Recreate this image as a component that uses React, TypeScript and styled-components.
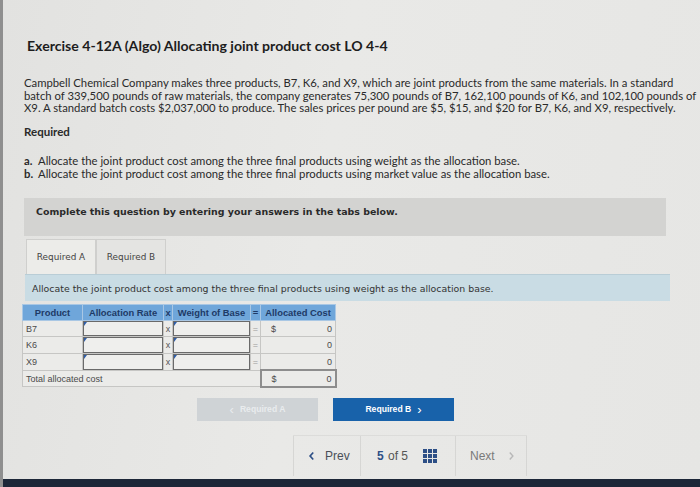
import React from "react";
import styled, { createGlobalStyle } from "styled-components";

const GlobalStyle = createGlobalStyle`
  html, body {
    margin: 0;
    padding: 0;
    background: #e6e6e4;
  }
`;

type Row = { product: string; dollar: boolean };

const rows: Row[] = [
  { product: "B7", dollar: true },
  { product: "K6", dollar: false },
  { product: "X9", dollar: false },
];

const paragraph = [
  "Campbell Chemical Company makes three products, B7, K6, and X9, which are joint products from the same materials. In a standard",
  "batch of 339,500 pounds of raw materials, the company generates 75,300 pounds of B7, 162,100 pounds of K6, and 102,100 pounds of",
  "X9. A standard batch costs $2,037,000 to produce. The sales prices per pound are $5, $15, and $20 for B7, K6, and X9, respectively.",
];

function App() {
  return (
    <Page>
      <GlobalStyle />
      <Content>
        <Title>Exercise 4-12A (Algo) Allocating joint product cost LO 4-4</Title>
        <Paragraph>
          {paragraph.map((line) => (
            <Line key={line}>{line}</Line>
          ))}
        </Paragraph>
        <Required>Required</Required>
        <List>
          <Item>
            <b>a.</b>
            <span>Allocate the joint product cost among the three final products using weight as the allocation base.</span>
          </Item>
          <Item>
            <b>b.</b>
            <span>Allocate the joint product cost among the three final products using market value as the allocation base.</span>
          </Item>
        </List>
        <Notice>Complete this question by entering your answers in the tabs below.</Notice>
        <Tabs>
          <Tab $active>Required A</Tab>
          <Tab>Required B</Tab>
        </Tabs>
        <Instruction>
          Allocate the joint product cost among the three final products using weight as the allocation base.
        </Instruction>
        <Table>
          <colgroup>
            <col style={{ width: 60 }} />
            <col style={{ width: 81 }} />
            <col style={{ width: 9 }} />
            <col style={{ width: 78 }} />
            <col style={{ width: 10 }} />
            <col style={{ width: 75 }} />
          </colgroup>
          <thead>
            <tr>
              <Th>Product</Th>
              <Th>Allocation Rate</Th>
              <Th>x</Th>
              <Th>Weight of Base</Th>
              <Th>=</Th>
              <Th>Allocated Cost</Th>
            </tr>
          </thead>
          <tbody>
            {rows.map((r) => (
              <tr key={r.product}>
                <Td>{r.product}</Td>
                <InputTd>
                  <Input />
                </InputTd>
                <OpTd>x</OpTd>
                <InputTd>
                  <Input />
                </InputTd>
                <OpTd $light>=</OpTd>
                <Td>
                  <Amount>
                    <span>{r.dollar ? "$" : ""}</span>
                    <span>0</span>
                  </Amount>
                </Td>
              </tr>
            ))}
            <tr>
              <Td colSpan={5}>Total allocated cost</Td>
              <TotalTd>
                <Amount>
                  <span>$</span>
                  <span>0</span>
                </Amount>
              </TotalTd>
            </tr>
          </tbody>
        </Table>
        <Buttons>
          <NavButton $disabled>
            <Chevron>&lsaquo;</Chevron> Required A
          </NavButton>
          <NavButton>
            Required B <Chevron>&rsaquo;</Chevron>
          </NavButton>
        </Buttons>
        <Pager>
          <PagerCell $width={67}>
            <PrevIcon viewBox="0 0 10 14">
              <path d="M7.5 2 L3 7 L7.5 12" />
            </PrevIcon>
            Prev
          </PagerCell>
          <PagerCell $width={95} $pad={16}>
            <Count>
              <strong>5</strong> of 5
            </Count>
            <GridIcon viewBox="0 0 14 14">
              {[0, 5, 10].map((y) =>
                [0, 5, 10].map((x) => <rect key={`${x}-${y}`} x={x} y={y} width="4" height="4" />)
              )}
            </GridIcon>
          </PagerCell>
          <PagerCell $width={72} $muted>
            Next
            <NextIcon viewBox="0 0 10 14">
              <path d="M2.5 2 L7 7 L2.5 12" />
            </NextIcon>
          </PagerCell>
        </Pager>
      </Content>
      <Bezel />
    </Page>
  );
}

export default App;

const Page = styled.div`
  width: 700px;
  height: 487px;
  display: flex;
  flex-direction: column;
  background: linear-gradient(100deg, #e2e2e0 0%, #e9e9e7 45%, #e6e6e4 100%);
  border-left: 3px solid #8f8f8f;
  box-sizing: border-box;
  overflow: hidden;
  font-family: "Lato", "Liberation Sans", sans-serif;
  color: #222;
`;

const Content = styled.div`
  flex: 1;
  padding: 37px 0 0 21px;
  display: flex;
  flex-direction: column;
`;

const Title = styled.h1`
  margin: 0;
  font-size: 14.1px;
  line-height: 18px;
  font-weight: 700;
  color: #1d1d1d;
  padding-left: 3px;
`;

const Paragraph = styled.div`
  margin-top: 22px;
  font-size: 11.3px;
  line-height: 12.6px;
  color: #2a2a2a;
`;

const Line = styled.div`
  white-space: nowrap;
`;

const Required = styled.div`
  margin-top: 10px;
  font-size: 11.5px;
  line-height: 14px;
  font-weight: 700;
  color: #2a2a2a;
`;

const List = styled.div`
  margin-top: 15px;
  font-size: 11.3px;
  line-height: 13px;
  color: #2a2a2a;
`;

const Item = styled.div`
  display: flex;
  gap: 4px;
  white-space: nowrap;

  b {
    width: 10px;
  }
`;

const Notice = styled.div`
  margin-top: 18px;
  width: 642px;
  height: 38px;
  box-sizing: border-box;
  padding: 8px 0 0 12px;
  background: #d3d3d1;
  font-family: "DejaVu Sans", "Liberation Sans", sans-serif;
  font-size: 9.45px;
  font-weight: 700;
  color: #2a2a2a;
`;

const Tabs = styled.div`
  display: flex;
  margin-top: 3px;
  padding-left: 2px;
`;

const Tab = styled.div<{ $active?: boolean }>`
  width: 70px;
  height: 35px;
  box-sizing: border-box;
  border: 1px solid #cfcfcd;
  border-bottom: none;
  background: ${(p) => (p.$active ? "#ecece9" : "#e4e4e2")};
  display: flex;
  align-items: center;
  justify-content: center;
  font-family: "DejaVu Sans", "Liberation Sans", sans-serif;
  font-size: 8.9px;
  color: #444;
`;

const Instruction = styled.div`
  width: 645px;
  height: 27px;
  box-sizing: border-box;
  margin-left: 1px;
  padding: 8px 0 0 7px;
  background: #c9dce4;
  border-top: 1px solid #b9cdd6;
  font-family: "DejaVu Sans", "Liberation Sans", sans-serif;
  font-size: 9.4px;
  color: #333;
  white-space: nowrap;
`;

const Table = styled.table`
  margin: 3px 0 0 -2px;
  border-collapse: collapse;
  table-layout: fixed;
  width: 313px;
  font-family: "Liberation Sans", sans-serif;
  font-size: 9px;
  color: #4a4a4a;
`;

const Th = styled.th`
  height: 15px;
  padding: 0;
  background: #6fa6da;
  border: 1px solid #a9c7e4;
  color: #1e3a66;
  font-weight: 700;
  font-size: 9.4px;
  text-align: center;
  white-space: nowrap;
  overflow: hidden;
`;

const Td = styled.td`
  height: 15.5px;
  padding: 0 3px;
  border: 1px solid #c6c6c4;
  background: #ebebe9;
  white-space: nowrap;
`;

const InputTd = styled.td`
  padding: 0;
  border: 1px solid #c6c6c4;
  background: #ebebe9;
`;

const OpTd = styled.td<{ $light?: boolean }>`
  padding: 0;
  border: 1px solid #c6c6c4;
  background: #ebebe9;
  text-align: center;
  color: ${(p) => (p.$light ? "#9a9a9a" : "#555")};
`;

const TotalTd = styled.td`
  padding: 0 3px;
  border: 2px solid #8d8d8d;
  background: #ebebe9;
`;

const Input = styled.div`
  position: relative;
  height: 15.5px;
  box-sizing: border-box;
  border: 1px solid #6a6a6a;
  background: #efefed;

  &::before {
    content: "";
    position: absolute;
    top: 0;
    left: 0;
    border-top: 4px solid #2f5ea8;
    border-right: 3px solid transparent;
  }
`;

const Amount = styled.div`
  display: flex;
  justify-content: space-between;
  padding-left: 7px;
`;

const Buttons = styled.div`
  display: flex;
  gap: 15px;
  margin: 10px 0 0 173px;
`;

const NavButton = styled.div<{ $disabled?: boolean }>`
  width: 121px;
  height: 23px;
  display: flex;
  align-items: center;
  justify-content: center;
  gap: 6px;
  background: ${(p) => (p.$disabled ? "#cfd3d6" : "#1862aa")};
  color: ${(p) => (p.$disabled ? "#e9ecee" : "#ffffff")};
  font-family: "Liberation Sans", sans-serif;
  font-size: 8.6px;
  font-weight: 700;
`;

const Chevron = styled.span`
  font-size: 13px;
  line-height: 1;
  font-weight: 400;
`;

const Pager = styled.div`
  display: flex;
  margin: 14px 0 0 269px;
  height: 40px;
  border-top: 1px solid #dcdcda;
  align-self: flex-start;
`;

const PagerCell = styled.div<{ $muted?: boolean; $width: number; $pad?: number }>`
  width: ${(p) => p.$width}px;
  box-sizing: border-box;
  display: flex;
  align-items: center;
  gap: 10px;
  padding-left: ${(p) => p.$pad ?? 14}px;
  border-left: 1px solid #d6d6d4;
  font-family: "Liberation Sans", sans-serif;
  font-size: 12px;
  white-space: nowrap;
  color: ${(p) => (p.$muted ? "#7a7a7a" : "#4a4f58")};

  &:last-child {
    border-right: 1px solid #d6d6d4;
  }
`;

const PrevIcon = styled.svg`
  width: 7px;
  height: 12px;
  fill: none;
  stroke: #2d4f86;
  stroke-width: 2.4;
`;

const NextIcon = styled.svg`
  width: 7px;
  height: 12px;
  fill: none;
  stroke: #b8b8b8;
  stroke-width: 2;
  margin-left: 3px;
`;

const Count = styled.span`
  color: #555;
  font-size: 12px;

  strong {
    color: #2d4f86;
    margin-right: 1px;
  }
`;

const GridIcon = styled.svg`
  width: 14px;
  height: 14px;
  fill: #2d4f86;
  margin-left: 5px;
`;

const Bezel = styled.div`
  height: 8px;
  background: #1d2738;
`;
